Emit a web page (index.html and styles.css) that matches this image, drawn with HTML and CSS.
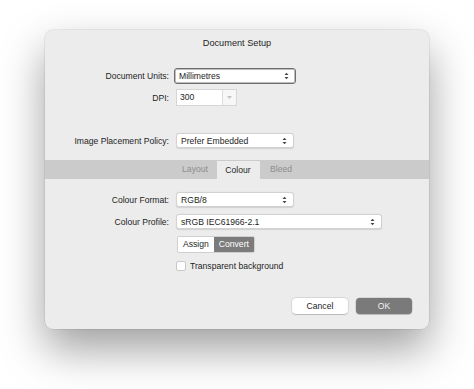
FILE: index.html
```html
<!DOCTYPE html>
<html lang="en">
  <head>
    <meta charset="UTF-8" />
    <title>Document Setup</title>
    <link rel="stylesheet" href="styles.css">
  </head>
  <body>
    <div class="dialog">
      <div class="title">Document Setup</div>

      <div class="form top">
        <label>Document Units:</label>
        <div class="select focus" style="width: 122px">
          <span>Millimetres</span>
          <svg class="updown" width="5" height="8" viewBox="0 0 5 8"><path d="M0.5 3 L2.5 0.8 L4.5 3 Z M0.5 5 L2.5 7.2 L4.5 5 Z" fill="#444"/></svg>
        </div>

        <label>DPI:</label>
        <div class="combo">
          <span class="value">300</span>
          <span class="drop"><svg width="5" height="3" viewBox="0 0 5 3"><path d="M0 0 L5 0 L2.5 3 Z" fill="#c4c4c4"/></svg></span>
        </div>
      </div>

      <div class="form policy">
        <label>Image Placement Policy:</label>
        <div class="select" style="width: 118px">
          <span>Prefer Embedded</span>
          <svg class="updown" width="5" height="8" viewBox="0 0 5 8"><path d="M0.5 3 L2.5 0.8 L4.5 3 Z M0.5 5 L2.5 7.2 L4.5 5 Z" fill="#444"/></svg>
        </div>
      </div>

      <div class="tabs">
        <div class="tab">Layout</div>
        <div class="tab active">Colour</div>
        <div class="tab">Bleed</div>
      </div>

      <div class="form colour">
        <label>Colour Format:</label>
        <div class="select" style="width: 118px">
          <span>RGB/8</span>
          <svg class="updown" width="5" height="8" viewBox="0 0 5 8"><path d="M0.5 3 L2.5 0.8 L4.5 3 Z M0.5 5 L2.5 7.2 L4.5 5 Z" fill="#444"/></svg>
        </div>

        <label>Colour Profile:</label>
        <div class="select" style="width: 206px">
          <span>sRGB IEC61966-2.1</span>
          <svg class="updown" width="5" height="8" viewBox="0 0 5 8"><path d="M0.5 3 L2.5 0.8 L4.5 3 Z M0.5 5 L2.5 7.2 L4.5 5 Z" fill="#444"/></svg>
        </div>

        <span></span>
        <div class="segmented">
          <span class="seg">Assign</span>
          <span class="seg on">Convert</span>
        </div>

        <span></span>
        <div class="check">
          <span class="box"></span>
          <span>Transparent background</span>
        </div>
      </div>

      <div class="actions">
        <button class="btn">Cancel</button>
        <button class="btn primary">OK</button>
      </div>
    </div>
  </body>
</html>
```

FILE: styles.css
```css
html, body {
  height: 100%;
}
body {
  margin: 0;
  box-sizing: border-box;
  padding: 30px 0 0 45px;
  background: #fff;
  font-family: "Liberation Sans", Arial, sans-serif;
  font-size: 8.6px;
  color: #1e1e1e;
}
.dialog {
  width: 384px;
  height: 299px;
  background: #ececec;
  border-radius: 8px;
  box-shadow: 0 0 0 0.5px rgba(0, 0, 0, 0.12), 0 20px 44px rgba(0, 0, 0, 0.38);
  display: flex;
  flex-direction: column;
  overflow: hidden;
}
.title {
  text-align: center;
  font-size: 9.2px;
  margin-top: 7px;
  height: 12px;
  line-height: 12px;
}
.form {
  display: grid;
  grid-template-columns: 124px auto;
  column-gap: 7px;
  align-items: center;
  justify-items: start;
}
.form label {
  justify-self: end;
}
.top {
  margin-top: 19px;
  row-gap: 5px;
}
.policy {
  margin-top: 27px;
}
.colour {
  margin-top: 13px;
  row-gap: 7px;
}
.select {
  box-sizing: border-box;
  height: 15px;
  background: #fff;
  border: 1px solid #d2d2d2;
  border-radius: 3px;
  box-shadow: 0 0.5px 1px rgba(0, 0, 0, 0.12);
  display: flex;
  align-items: center;
  justify-content: space-between;
  padding: 0 6px 0 4px;
}
.select.focus {
  height: 16px;
  margin-left: -2px;
  border: 1px solid #6f6f6f;
  box-shadow: inset 0 0 0 1px #bdbdbd;
}
.combo {
  box-sizing: border-box;
  width: 61px;
  height: 17px;
  background: #fff;
  border: 1px solid #d6d6d6;
  display: flex;
}
.combo .value {
  flex: 1;
  padding-left: 3px;
  line-height: 15px;
}
.combo .drop {
  width: 13px;
  border-left: 1px solid #dcdcdc;
  background: #f7f7f7;
  display: flex;
  align-items: center;
  justify-content: center;
}
.tabs {
  margin-top: 12px;
  height: 19px;
  background: #cbcbcb;
  display: flex;
  justify-content: center;
  padding-left: 2px;
}
.tab {
  width: 43px;
  text-align: center;
  line-height: 19px;
  color: #8d8d8d;
}
.tab.active {
  margin-top: 1px;
  line-height: 18px;
  background: #ececec;
  color: #1e1e1e;
}
.segmented {
  display: flex;
  height: 15px;
  margin-left: 1px;
  border: 1px solid #d0d0d0;
  border-radius: 2px;
  overflow: hidden;
}
.seg {
  line-height: 15px;
  padding: 0 5px;
  background: #fff;
}
.seg.on {
  background: #7c7c7c;
  color: #fff;
}
.check {
  display: flex;
  align-items: center;
  gap: 4px;
  margin-top: 1px;
}
.box {
  width: 8px;
  height: 8px;
  background: #fff;
  border: 0.5px solid #c8c8c8;
  border-radius: 2px;
}
.actions {
  margin-top: auto;
  margin-bottom: 15px;
  display: flex;
  justify-content: flex-end;
  gap: 8px;
  padding-right: 17px;
}
.btn {
  width: 56px;
  height: 16px;
  border: none;
  border-radius: 4px;
  font-family: inherit;
  font-size: 8.6px;
  background: #fff;
  color: #1e1e1e;
  box-shadow: 0 0 0 0.5px rgba(0, 0, 0, 0.15), 0 0.5px 1px rgba(0, 0, 0, 0.15);
}
.btn.primary {
  background: #7a7a7a;
  color: #f2f2f2;
}
```
